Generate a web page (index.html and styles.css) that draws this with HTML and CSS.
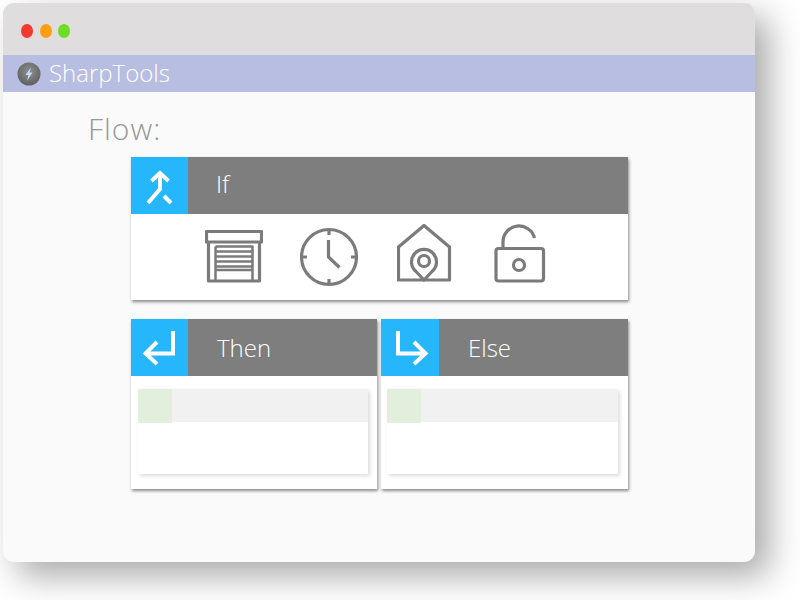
FILE: index.html
```html
<!DOCTYPE html>
<html lang="en">
<head>
<meta charset="utf-8">
<title>SharpTools Flow</title>
<link rel="stylesheet" href="styles.css">
</head>
<body>
<div class="window">
  <div class="titlebar">
    <span class="dot dot-red"></span>
    <span class="dot dot-orange"></span>
    <span class="dot dot-green"></span>
  </div>
  <div class="brandbar">
    <svg class="logo" width="24" height="24" viewBox="0 0 24 24">
      <defs>
        <radialGradient id="logoGrad" cx="0.5" cy="0.4" r="0.65">
          <stop offset="0" stop-color="#8f8f92"/>
          <stop offset="1" stop-color="#5c5c5e"/>
        </radialGradient>
      </defs>
      <circle cx="12" cy="12" r="11.500" fill="url(#logoGrad)"/>
      <path d="M14 5.500 L8.500 13 H11.500 L10 19 L15.500 10.500 H12.500 Z" fill="#c4def5"/>
    </svg>
    <span class="brand">SharpTools</span>
  </div>
  <div class="content">
    <div class="flow-label">Flow:</div>
    <div class="flow">
      <section class="card">
        <header class="card-head">
          <span class="badge">
            <svg width="57" height="57" viewBox="131 157 57 57" class="badge-icon">
              <path d="M160 174 V189 L148 203 M164 196 L171 203 M151.500 181 L160 173 L168.500 181"/>
            </svg>
          </span>
          <span class="card-title title-if">If</span>
        </header>
        <div class="icons">
          <svg class="device" width="58" height="86" viewBox="205 214 58 86">
            <path d="M206.500 231.500 H261.500 V242 H206.500 Z"/>
            <path d="M208.500 242 V281 H259.500 V242"/>
            <path d="M215.500 246.500 H252.500 V281 M215.500 246.500 V281 M216 251.500 H252 M216 256.500 H252 M216 261.500 H252 M216 266.500 H252 M216 270 H252" class="thin"/>
          </svg>
          <svg class="device" width="60" height="86" viewBox="300 214 60 86">
            <circle cx="329" cy="257" r="27.500"/>
            <path d="M329 229.500 V235 M329 279 V284.500 M301.500 257 H307 M351 257 H356.500"/>
            <path d="M328.500 240 V257 L339.500 267.500"/>
          </svg>
          <svg class="device" width="60" height="86" viewBox="397 214 60 86">
            <path d="M398.500 280 V247 L424 225.500 L449.500 247 V280 Z"/>
            <path d="M424 280 L416 271.500 A12.500 12.500 0 1 1 432 271.500 Z"/>
            <circle cx="424" cy="261" r="5.500"/>
          </svg>
          <svg class="device" width="52" height="86" viewBox="494 214 52 86">
            <rect x="496" y="248.500" width="47.500" height="32.500" rx="2.500"/>
            <path d="M503 248.500 V242 A16 16 0 0 1 534.500 238"/>
            <circle cx="519" cy="265" r="5.500"/>
          </svg>
        </div>
      </section>
      <div class="branches">
        <section class="card branch branch-then">
          <header class="card-head">
            <span class="badge">
              <svg width="57" height="57" viewBox="131 319 57 57" class="badge-icon wide">
                <path d="M173 331 V353.500 H146 M157 342 L145.500 353.500 L157 364"/>
              </svg>
            </span>
            <span class="card-title title-then">Then</span>
          </header>
          <div class="branch-body">
            <div class="tile">
              <div class="tile-head"><span class="tile-swatch"></span></div>
            </div>
          </div>
        </section>
        <section class="card branch branch-else">
          <header class="card-head">
            <span class="badge badge-else">
              <svg width="58" height="57" viewBox="381 319 58 57" class="badge-icon wide">
                <path d="M398 331 V353.500 H425 M414 342 L425.500 353.500 L414 364"/>
              </svg>
            </span>
            <span class="card-title title-else">Else</span>
          </header>
          <div class="branch-body branch-body-else">
            <div class="tile tile-else">
              <div class="tile-head"><span class="tile-swatch"></span></div>
            </div>
          </div>
        </section>
      </div>
    </div>
  </div>
</div>
</body>
</html>
```
FILE: styles.css
```css
html, body {
  margin: 0;
  padding: 0;
  width: 800px;
  height: 600px;
  overflow: hidden;
  background: #fff;
}
body {
  padding: 3px 0 0 3px;
  box-sizing: border-box;
  font-family: "Open Sans", "Liberation Sans", sans-serif;
}
.window {
  width: 752px;
  height: 559px;
  border-radius: 11px;
  background: #fafafa;
  box-shadow: 14px 14px 34px rgba(0, 0, 0, 0.34);
  overflow: hidden;
}
.titlebar {
  height: 52px;
  background: #dfdddd;
  display: flex;
  align-items: center;
  padding: 3px 0 0 18px;
  box-sizing: border-box;
}
.dot {
  width: 12px;
  height: 14px;
  border-radius: 50%;
  margin-right: 6.500px;
}
.dot-red { background: #f4392e; }
.dot-orange { background: #ff9e12; }
.dot-green { background: #6fdc24; }
.brandbar {
  height: 37px;
  background: #b7bee1;
  display: flex;
  align-items: center;
  padding-left: 14px;
}
.logo { margin-right: 8px; }
.brand {
  font-size: 24px;
  font-weight: 300;
  color: #fff;
  line-height: 37px;
  padding-bottom: 3px;
}
.content { padding-left: 85px; }
.flow-label {
  font-size: 30px;
  font-weight: 300;
  letter-spacing: 1px;
  color: #989696;
  line-height: 38px;
  height: 65px;
  padding-top: 18px;
  box-sizing: border-box;
}
.flow {
  width: 497px;
  margin-left: 43px;
  display: flex;
  flex-direction: column;
  gap: 19px;
}
.card {
  background: #fff;
  box-shadow: 1px 2px 3px rgba(0, 0, 0, 0.45);
}
.card-head {
  height: 57px;
  background: #7e7e7e;
  display: flex;
  align-items: center;
}
.badge {
  width: 57px;
  height: 57px;
  background: #25b6fb;
  flex: none;
}
.badge-else { width: 58px; }
.badge-icon { display: block; }
.badge-icon path {
  fill: none;
  stroke: #fff;
  stroke-width: 4;
}
.card-title {
  font-size: 24px;
  font-weight: 300;
  color: #fff;
  line-height: 57px;
}
.title-if {
  margin-left: 28px;
  padding-bottom: 4px;
}
.title-then { margin-left: 29px; }
.title-else { margin-left: 29px; }
.icons {
  height: 86px;
  display: flex;
  align-items: center;
  padding-left: 74px;
  gap: 37px;
}
.device { flex: none; }
.device path, .device circle, .device rect {
  fill: none;
  stroke: #7b7b7b;
  stroke-width: 3.200;
  stroke-linejoin: round;
}
.device path.thin { stroke-width: 2.500; }
.branches {
  display: flex;
  gap: 4px;
}
.branch {
  height: 170px;
}
.branch-then { width: 246px; }
.branch-else { width: 247px; }
.branch-body { padding: 13px 0 0 7px; }
.branch-body-else { padding-left: 6px; }
.tile {
  width: 230px;
  height: 85px;
  background: #fff;
  box-shadow: 2px 2px 4px rgba(0, 0, 0, 0.14);
}
.tile-else { width: 231px; }
.tile-head {
  height: 33px;
  background: #f1f1f1;
}
.tile-swatch {
  display: block;
  width: 34px;
  height: 34px;
  background: #e2efdc;
}
```
